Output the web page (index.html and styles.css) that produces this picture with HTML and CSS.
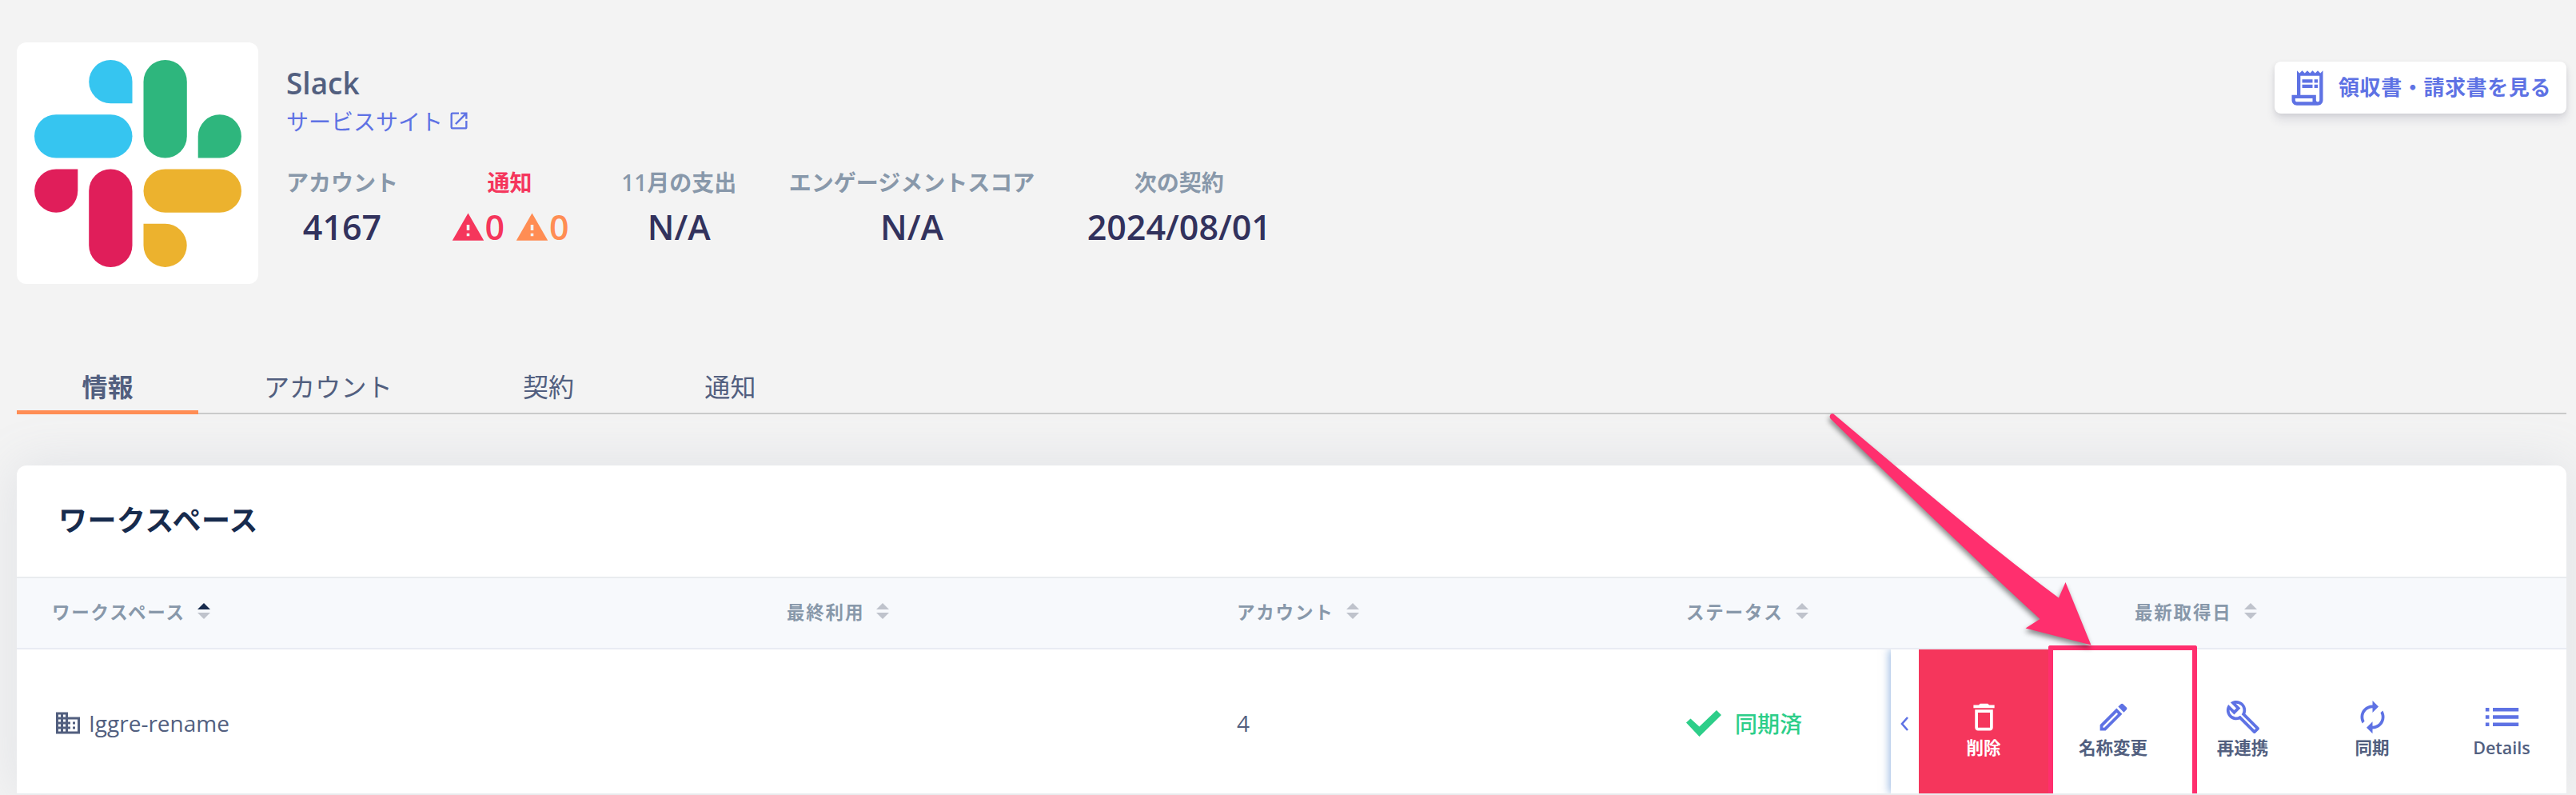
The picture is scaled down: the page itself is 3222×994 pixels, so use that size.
FILE: index.html
```html
<!DOCTYPE html>
<html lang="ja">
<head>
    <meta charset="UTF-8">
    <meta name="viewport" content="width=device-width, initial-scale=1.0">
    <title>Slack</title>
    <link rel="stylesheet" href="styles.css">
</head>
<body>
<header class="service">
    <div class="logo">
        <svg width="259" height="259" viewBox="0 0 259 259">
            <path fill="#36c5f0" d="M95.4 0a27.1 27.1 0 0 0 0 54.3h27.1V27.1A27.1 27.1 0 0 0 95.4 0z"/>
            <rect fill="#36c5f0" x="0" y="68.2" width="122.5" height="54.3" rx="27.15"/>
            <rect fill="#2eb67d" x="136.5" y="0" width="54.3" height="122.5" rx="27.15"/>
            <path fill="#2eb67d" d="M204.7 122.5V95.4a27.1 27.1 0 1 1 27.1 27.1z"/>
            <path fill="#e01e5a" d="M54.3 136.5v27.1a27.1 27.1 0 1 1-27.1-27.1z"/>
            <rect fill="#e01e5a" x="68.2" y="136.5" width="54.3" height="122.5" rx="27.15"/>
            <rect fill="#ecb22e" x="136.5" y="136.5" width="122.5" height="54.3" rx="27.15"/>
            <path fill="#ecb22e" d="M136.5 204.7h27.1a27.1 27.1 0 1 1-27.1 27.1z"/>
        </svg>
    </div>
    <div class="service-info">
        <h1>Slack</h1>
        <a class="site-link" href="#">サービスサイト
            <svg width="28" height="28" viewBox="0 0 24 24"><path d="M19 19H5V5h7V3H5a2 2 0 0 0-2 2v14a2 2 0 0 0 2 2h14c1.1 0 2-.9 2-2v-7h-2v7zM14 3v2h3.59l-9.83 9.83 1.41 1.41L19 6.41V10h2V3h-7z"/></svg>
        </a>
        <div class="stats">
            <div class="stat">
                <div class="stat-label">アカウント</div>
                <div class="stat-value">4167</div>
            </div>
            <div class="stat">
                <div class="stat-label danger">通知</div>
                <div class="stat-value alerts">
                    <span class="alert danger"><svg width="43" height="43" viewBox="0 0 24 24"><path d="M1 21h22L12 2 1 21zm12-3h-2v-2h2v2zm0-4h-2v-4h2v4z"/></svg>0</span>
                    <span class="alert warning"><svg width="43" height="43" viewBox="0 0 24 24"><path d="M1 21h22L12 2 1 21zm12-3h-2v-2h2v2zm0-4h-2v-4h2v4z"/></svg>0</span>
                </div>
            </div>
            <div class="stat">
                <div class="stat-label">11月の支出</div>
                <div class="stat-value">N/A</div>
            </div>
            <div class="stat">
                <div class="stat-label">エンゲージメントスコア</div>
                <div class="stat-value">N/A</div>
            </div>
            <div class="stat">
                <div class="stat-label">次の契約</div>
                <div class="stat-value">2024/08/01</div>
            </div>
        </div>
    </div>
    <button class="receipt-btn">
        <svg width="52" height="52" viewBox="0 0 24 24"><path d="M19.5 3.5L18 2l-1.5 1.5L15 2l-1.5 1.5L12 2l-1.5 1.5L9 2 7.5 3.5 6 2v14H3v3c0 1.66 1.34 3 3 3h12c1.66 0 3-1.34 3-3V2l-1.5 1.5zM15 20H6c-.55 0-1-.45-1-1v-1h10v2zm4-1c0 .55-.45 1-1 1s-1-.45-1-1v-3H8V5h11v14zM9 7h6v2H9zM16 7h2v2h-2zM9 10h6v2H9zM16 10h2v2h-2z"/></svg>
        <span>領収書・請求書を見る</span>
    </button>
</header>

<nav class="tabs">
    <a class="tab active" href="#">情報</a>
    <a class="tab" href="#">アカウント</a>
    <a class="tab" href="#">契約</a>
    <a class="tab" href="#">通知</a>
</nav>

<section class="card">
    <h2>ワークスペース</h2>
    <div class="grid-row table-head">
        <div class="th">ワークスペース<span class="sort asc"></span></div>
        <div class="th">最終利用<span class="sort"></span></div>
        <div class="th">アカウント<span class="sort"></span></div>
        <div class="th">ステータス<span class="sort"></span></div>
        <div class="th">最新取得日<span class="sort"></span></div>
    </div>
    <div class="grid-row table-row">
        <div class="workspace">
            <svg width="36" height="36" viewBox="0 0 24 24"><path d="M12 7V3H2v18h20V7H12zM6 19H4v-2h2v2zm0-4H4v-2h2v2zm0-4H4V9h2v2zm0-4H4V5h2v2zm4 12H8v-2h2v2zm0-4H8v-2h2v2zm0-4H8V9h2v2zm0-4H8V5h2v2zm10 12h-8v-2h2v-2h-2v-2h2v-2h-2V9h8v10zm-2-8h-2v2h2v-2zm0 4h-2v2h2v-2z"/></svg>
            Iggre-rename
        </div>
        <div></div>
        <div>4</div>
        <div class="synced">
            <svg width="44" height="33" viewBox="0 0 44 33"><path d="M0 15.500L5.500 10.500 16.500 20.500 38 0 44 6 16.500 33z"/></svg>
            同期済
        </div>
        <div></div>

        <!-- slide-out row actions -->
        <div class="actions">
            <button class="collapse">
                <svg width="12" height="20" viewBox="0 0 12 20"><path d="M10 2L3 10l7 8"/></svg>
            </button>
            <button class="action delete">
                <svg width="45" height="45" viewBox="0 0 24 24"><path d="M16 9v10H8V9h8m-1.5-6h-5l-1 1H5v2h14V4h-3.5l-1-1zM18 7H6v12c0 1.1.9 2 2 2h8c1.1 0 2-.9 2-2V7z"/></svg>
                削除
            </button>
            <button class="action">
                <svg width="45" height="45" viewBox="0 0 24 24"><path d="M14.06 9.02l.92.92L5.92 19H5v-.92l9.06-9.06M17.66 3c-.25 0-.51.1-.7.29l-1.83 1.83 3.75 3.75 1.83-1.83c.39-.39.39-1.02 0-1.41l-2.34-2.34c-.2-.2-.45-.29-.71-.29zm-3.6 3.19L3 17.25V21h3.75L17.81 9.94l-3.75-3.75z"/></svg>
                名称変更
            </button>
            <button class="action">
                <svg width="45" height="45" viewBox="0 0 24 24"><path d="M22.61 18.99l-9.08-9.08c.93-2.34.45-5.1-1.44-7C9.79.61 6.21.4 3.66 2.26L7.5 6.11 6.08 7.52 2.25 3.69C.39 6.23.6 9.82 2.9 12.11c1.86 1.86 4.57 2.35 6.89 1.48l9.11 9.11c.39.39 1.02.39 1.41 0l2.3-2.3c.4-.38.4-1.01 0-1.41zm-3 1.6l-9.46-9.46c-.61.45-1.29.72-2 .82-1.36.2-2.79-.21-3.83-1.25C3.37 9.76 2.93 8.5 3 7.26l3.09 3.09 4.24-4.24-3.09-3.09c1.24-.07 2.49.37 3.44 1.31 1.08 1.08 1.49 2.57 1.24 3.96-.12.71-.42 1.37-.88 1.96l9.45 9.45-.88.89z"/></svg>
                再連携
            </button>
            <button class="action">
                <svg width="45" height="45" viewBox="0 0 24 24"><path d="M12 6v3l4-4-4-4v3c-4.42 0-8 3.58-8 8 0 1.57.46 3.03 1.24 4.26L6.7 14.8A5.87 5.87 0 0 1 6 12c0-3.31 2.69-6 6-6zm6.76 1.74L17.3 9.2c.44.84.7 1.79.7 2.8 0 3.31-2.69 6-6 6v-3l-4 4 4 4v-3c4.42 0 8-3.58 8-8 0-1.57-.46-3.03-1.24-4.26z"/></svg>
                同期
            </button>
            <button class="action">
                <svg width="45" height="45" viewBox="2.2 2.2 19.6 19.6"><path d="M3 13h2v-2H3v2zm0 4h2v-2H3v2zm0-8h2V7H3v2zm4 4h14v-2H7v2zm0 4h14v-2H7v2zM7 7v2h14V7H7z"/></svg>
                Details
            </button>
        </div>
        <div class="highlight"></div>
    </div>
</section>

<!-- arrow pointing at the rename action -->
<svg class="arrow" width="340" height="310" viewBox="0 0 340 310">
    <path d="M14.500 8.500C12.500 6.500 9.500 7 8.800 10 8.500 11.500 8.800 13 10 14C80 82 180 180 271.500 264L253.500 275.500 335.500 296.500 303.500 218 295 237.500C200 167 105 84 14.500 8.500z"/>
</svg>
</body>
</html>
```
FILE: styles.css
```css
* {
    box-sizing: border-box;
}
body {
    margin: 0;
    height: 994px;
    padding: 53px 12px 0 21px;
    overflow: hidden;
    position: relative;
    background-color: #f3f3f3;
    color: #525f7f;
    font-family: "Open Sans", "Noto Sans CJK JP", sans-serif;
    font-size: 28px;
}
svg {
    display: block;
    flex: none;
    fill: currentColor;
}
button {
    border: 0;
    padding: 0;
    background: none;
    font-family: inherit;
    cursor: pointer;
}
a {
    text-decoration: none;
}

/* service header */
.service {
    display: flex;
    align-items: flex-start;
    height: 399px;
}
.logo {
    display: flex;
    align-items: center;
    justify-content: center;
    width: 302px;
    height: 302px;
    border-radius: 12px;
    background-color: #fff;
}
.service-info {
    flex: 1;
    padding: 26px 0 0 35px;
}
h1 {
    margin: 0;
    font-size: 37px;
    font-weight: 600;
    line-height: 50px;
}
.site-link {
    display: flex;
    align-items: center;
    gap: 6px;
    height: 44px;
    color: #5e72e4;
}
.stats {
    display: flex;
    gap: 65.500px;
    margin-top: 34px;
}
.stat {
    text-align: center;
}
.stat-label {
    color: #8898aa;
    font-weight: 600;
    line-height: 42px;
    height: 42px;
}
.stat-value {
    display: flex;
    justify-content: center;
    height: 70px;
    color: #32325d;
    font-size: 43px;
    font-weight: 600;
    line-height: 70px;
}
.alerts {
    gap: 13px;
}
.alert {
    display: flex;
    align-items: center;
}
.danger {
    color: #f5365c;
}
.warning {
    color: #ff8d54;
}
.receipt-btn {
    display: flex;
    align-items: center;
    gap: 13px;
    width: 365px;
    height: 65px;
    margin-top: 24px;
    padding-left: 15px;
    border-radius: 8px;
    background-color: #fff;
    box-shadow: 0 8px 12px rgba(50, 50, 93, .11), 0 2px 6px rgba(0, 0, 0, .08);
    color: #5e72e4;
    font-size: 26px;
    font-weight: 600;
    letter-spacing: .6px;
}
.receipt-btn span {
    padding-bottom: 3px;
}

/* tabs */
.tabs {
    display: flex;
    height: 66px;
    border-bottom: 2px solid #c9caca;
}
.tab {
    height: 66px;
    padding: 0 81.500px;
    color: #525f7f;
    font-size: 32px;
    letter-spacing: .2px;
    line-height: 63px;
}
.tab.active {
    border-bottom: 5px solid #ff8d54;
    font-weight: 600;
}

/* workspace table */
.card {
    height: 411px;
    margin-top: 64px;
    border-radius: 12px 12px 0 0;
    background-color: #fff;
    box-shadow: 0 0 64px rgba(136, 152, 170, .18);
}
h2 {
    height: 139px;
    margin: 0;
    padding-left: 52px;
    color: #172b4d;
    font-size: 36px;
    font-weight: 600;
    letter-spacing: .5px;
    line-height: 138px;
}
.grid-row {
    display: grid;
    grid-template-columns: 919px 563px 562px 561px 1fr;
    align-items: center;
    padding-left: 44px;
}
.table-head {
    height: 91px;
    padding-bottom: 5px;
    border-top: 2px solid #e9ecef;
    border-bottom: 2px solid #e9ecf3;
    background-color: #f7f9fc;
}
.th {
    display: flex;
    align-items: center;
    color: #8898aa;
    font-size: 22.500px;
    font-weight: 600;
    letter-spacing: 1.800px;
}
.sort {
    display: flex;
    flex-direction: column;
    gap: 4px;
    margin-left: 15px;
}
.sort::before,
.sort::after {
    content: "";
    border: 8.500px solid transparent;
}
.sort::before {
    border-top: 0;
    border-bottom-color: #bfc3cc;
}
.sort::after {
    border-bottom: 0;
    border-top-color: #bfc3cc;
}
.sort.asc::before {
    border-bottom-color: #172b4d;
}
.table-row {
    position: relative;
    height: 181px;
    padding-top: 4px;
    border-bottom: 1px solid #e9ecef;
}
.workspace {
    display: flex;
    align-items: center;
    gap: 8px;
    padding-left: 2px;
}
.synced {
    display: flex;
    align-items: center;
    gap: 17px;
    color: #2dce89;
    font-weight: 500;
}
.actions {
    position: absolute;
    top: 0;
    right: 0;
    bottom: 0;
    display: flex;
    width: 845px;
    background-color: #fff;
    box-shadow: -2px 0 10px rgba(60, 120, 200, .5);
    clip-path: inset(0 0 0 -20px);
}
.collapse {
    display: flex;
    align-items: center;
    width: 35px;
    padding: 6px 0 0 11px;
}
.collapse svg {
    fill: none;
    stroke: #5e72e4;
    stroke-width: 2.600;
}
.action {
    flex: 1;
    display: flex;
    flex-direction: column;
    align-items: center;
    padding-top: 62px;
    color: #525f7f;
    font-size: 21.500px;
    font-weight: 600;
    line-height: 32px;
}
.action svg {
    color: #5e72e4;
}
.delete {
    background-color: #f5365c;
    color: #fff;
}
.delete svg {
    color: #fff;
}

/* annotations */
.highlight {
    position: absolute;
    top: -5px;
    right: 462px;
    bottom: 0;
    width: 186px;
    border: 6px solid #ff2f6e;
    border-bottom: 0;
    border-radius: 3px 3px 0 0;
}
.arrow {
    position: absolute;
    top: 510px;
    left: 2280px;
    fill: #ff2f6e;
    filter: drop-shadow(-1px 4px 3px rgba(0, 0, 0, .45));
}
```
